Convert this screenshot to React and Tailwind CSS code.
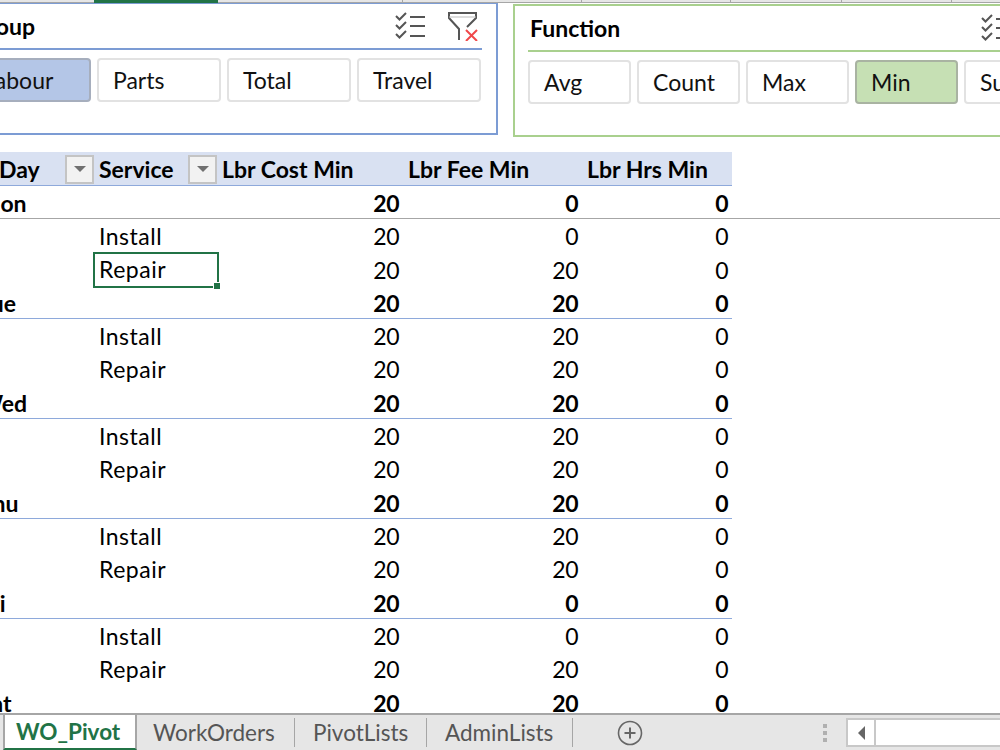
import React from 'react';

const days = [
  { day: 'Mon', cost: 20, fee: 0, hrs: 0, line: 'border-[#a6a6a6]', install: 0, repair: 20, selected: true },
  { day: 'Tue', cost: 20, fee: 20, hrs: 0, install: 20, repair: 20 },
  { day: 'Wed', cost: 20, fee: 20, hrs: 0, install: 20, repair: 20 },
  { day: 'Thu', cost: 20, fee: 20, hrs: 0, install: 20, repair: 20 },
  { day: 'Fri', cost: 20, fee: 0, hrs: 0, install: 0, repair: 20 },
  { day: 'Sat', cost: 20, fee: 20, hrs: 0, last: true },
];

const gridCols = 'grid grid-cols-[116px_124px_185px_179px_150px] w-[754px] -ml-[22px]';

const MultiSelectIcon = () => (
  <svg width="30" height="28" viewBox="0 0 30 28" fill="none" stroke="#555" strokeWidth="2" className="shrink-0">
    <path d="M1 4 L4.5 7.5 L11 1" />
    <path d="M1 13 L4.5 16.5 L11 10" />
    <path d="M1 22 L4.5 25.5 L11 19" />
    <path d="M15 5 H30 M15 14 H30 M15 24 H30" />
  </svg>
);

const ClearFilterIcon = () => (
  <svg width="30" height="29" viewBox="0 0 30 29" fill="none" className="shrink-0">
    <path d="M11 28 V17 L1 6 V1 H28 V6 L19 15" stroke="#555" strokeWidth="2" />
    <path d="M1 5 H28" stroke="#bbb" strokeWidth="1" />
    <path d="M18 18 L29 29 M29 18 L18 29" stroke="#f0484a" strokeWidth="2" />
  </svg>
);

const FilterButton = () => (
  <div className="w-[29px] h-[29px] shrink-0 bg-[#f2f2f2] border-2 border-[#c4c4c4] flex items-center justify-center">
    <div className="w-0 h-0 border-x-[6px] border-x-transparent border-t-[6px] border-t-[#707070]" />
  </div>
);

const Slicer = ({ title, titleClass, panelClass, lineClass, buttonClass, active, activeClass, buttons }) => (
  <div className={`shrink-0 border-2 bg-white flex flex-col pr-[14px] ${panelClass}`}>
    <div className={`h-[46px] shrink-0 flex items-center ${lineClass} border-b-2`}>
      <span className={`text-[23px] font-bold text-black ${titleClass}`}>{title}</span>
      <div className="ml-auto mr-[4px] flex items-center gap-[23px]">
        <MultiSelectIcon />
        <ClearFilterIcon />
      </div>
    </div>
    <div className="flex gap-[6px] mt-[8px]">
      {buttons.map((b) => (
        <div
          key={b}
          className={`${buttonClass} h-[44px] shrink-0 rounded-[4px] border-2 flex items-center pl-[14px] text-[23px] text-[#111] ${
            b === active ? activeClass : 'border-[#e2e2e2] bg-white'
          }`}
        >
          {b}
        </div>
      ))}
    </div>
  </div>
);

const Row = ({ children, bold, className = 'pt-[2px]' }) => (
  <div className={`${gridCols} h-[33.33px] items-center text-[23px] text-black leading-none ${bold ? 'font-bold' : ''} ${className}`}>
    {children}
  </div>
);

const Num = ({ v }) => <div className="text-right pr-[4px] tracking-[-0.5px]">{v}</div>;

const DayGroup = ({ d }) => (
  <>
    <div className="relative">
      <Row bold className={d.last ? 'pt-[2px]' : `pt-[2px] border-b ${d.line || 'border-[#8ea9db]'}`}>
        <div className="pl-[1px]">{d.day}</div>
        <div />
        <Num v={d.cost} />
        <Num v={d.fee} />
        <Num v={d.hrs} />
      </Row>
      {d.line && <div className="absolute bottom-0 left-[732px] w-[268px] h-px bg-[#a6a6a6]" />}
    </div>
    {!d.last && (
      <>
        <Row>
          <div />
          <div className="pl-[5px] tracking-[0.5px]">Install</div>
          <Num v={d.cost} />
          <Num v={d.install} />
          <Num v={d.hrs} />
        </Row>
        <Row className="pt-[1px]">
          <div />
          {d.selected ? (
            <div className="relative h-[36px] -mt-[2px] -ml-[1px] w-[126px] border-2 border-[#217346] pl-[4px] flex items-center tracking-[0.5px]">
              Repair
              <div className="absolute -right-[4px] -bottom-[4px] w-[8px] h-[8px] bg-[#217346] border border-white" />
            </div>
          ) : (
            <div className="pl-[5px] tracking-[0.5px]">Repair</div>
          )}
          <Num v={d.cost} />
          <Num v={d.repair} />
          <Num v={d.hrs} />
        </Row>
      </>
    )}
  </>
);

const App = () => {
  return (
    <div className="w-[1000px] h-[750px] overflow-hidden flex flex-col bg-white font-['Lato',sans-serif]">
      {/* column header strip */}
      <div className="h-[3px] shrink-0 flex bg-[#e6e6e6] border-b border-[#a6a6a6]">
        <div className="w-[94px]" />
        <div className="w-[124px] h-[3px] bg-[#217346]" />
        <div className="w-[185px] border-r border-[#a6a6a6]" />
        <div className="w-[179px] border-r border-[#a6a6a6]" />
        <div className="w-[149px] border-r border-[#a6a6a6]" />
        <div className="w-[111px] border-r border-[#a6a6a6]" />
        <div className="w-[110px] border-r border-[#a6a6a6]" />
      </div>

      {/* slicers */}
      <div className="h-[149px] shrink-0 flex items-start -ml-[50px] gap-[15px]">
        <Slicer
          title="Group"
          titleClass="ml-[4px]"
          panelClass="w-[548px] h-[132px] pl-[15px] border-[#7c9cd4] border-t"
          lineClass="border-[#7c9cd4]"
          buttonClass="w-[124px]"
          active="Labour"
          activeClass="border-[#a6aebd] bg-[#b4c6e7]"
          buttons={['Labour', 'Parts', 'Total', 'Travel']}
        />
        <div className="mt-[1px]">
          <Slicer
            title="Function"
            titleClass="ml-[2px]"
            panelClass="w-[571px] h-[133px] pl-[13px] border-[#a9d08e]"
            lineClass="border-[#a9d08e]"
            buttonClass="w-[103px]"
            active="Min"
            activeClass="border-[#a9b3a2] bg-[#c6e0b4]"
            buttons={['Avg', 'Count', 'Max', 'Min', 'Sum']}
          />
        </div>
      </div>

      {/* pivot table */}
      <div className="flex-1 min-h-0 overflow-hidden">
        <div className={`${gridCols} h-[34px] pt-[1px] items-center bg-[#d9e1f2] border-b border-[#8ea9db] text-[23px] font-bold text-black leading-none`}>
          <div className="flex items-center justify-between pl-[21px]">
            <span>Day</span>
            <FilterButton />
          </div>
          <div className="flex items-center justify-between pl-[5px] pr-[1px]">
            <span>Service</span>
            <FilterButton />
          </div>
          <div className="pl-[4px]">Lbr Cost Min</div>
          <div className="pl-[5px]">Lbr Fee Min</div>
          <div className="pl-[5px]">Lbr Hrs Min</div>
        </div>
        {days.map((d) => (
          <DayGroup key={d.day} d={d} />
        ))}
      </div>

      {/* sheet tabs */}
      <div className="h-[37px] shrink-0 flex items-stretch bg-[#e6e6e6] border-t-2 border-[#a6a6a6] text-[22.5px] text-[#555]">
        <div className="w-[3px]" />
        <div className="w-[134px] -mt-[2px] border-x-2 border-t-2 border-[#a6a6a6] border-b-2 border-b-[#217346] bg-white flex items-center pl-[11px] font-bold text-[#217346]">
          WO_Pivot
        </div>
        <div className="w-[157px] flex items-center pl-[16px]">WorkOrders</div>
        <div className="w-px my-[3px] bg-[#a6a6a6]" />
        <div className="w-[131px] flex items-center pl-[18px]">PivotLists</div>
        <div className="w-px my-[3px] bg-[#a6a6a6]" />
        <div className="w-[145px] flex items-center pl-[18px]">AdminLists</div>
        <div className="w-px my-[3px] bg-[#a6a6a6]" />
        <div className="w-[114px] flex items-center justify-center">
          <svg width="26" height="26" viewBox="0 0 26 26" fill="none" stroke="#666" strokeWidth="1.6">
            <circle cx="13" cy="13" r="11.5" />
            <path d="M13 7.5 V18.5 M7.5 13 H18.5" strokeWidth="2" />
          </svg>
        </div>
        <div className="w-[159px] flex flex-col items-end justify-center gap-[3px] pr-[19px]">
          <div className="w-[4px] h-[4px] bg-[#b0b0b0]" />
          <div className="w-[4px] h-[4px] bg-[#b0b0b0]" />
          <div className="w-[4px] h-[4px] bg-[#b0b0b0]" />
        </div>
        <div className="flex-1 h-[29px] mt-[3px] bg-white border-2 border-[#c8c8c8] border-r-0 flex">
          <div className="w-[28px] border-r-2 border-[#c8c8c8] flex items-center justify-center">
            <div className="w-0 h-0 border-y-[7px] border-y-transparent border-r-[7px] border-r-[#666]" />
          </div>
        </div>
      </div>
    </div>
  );
};

export default App;
